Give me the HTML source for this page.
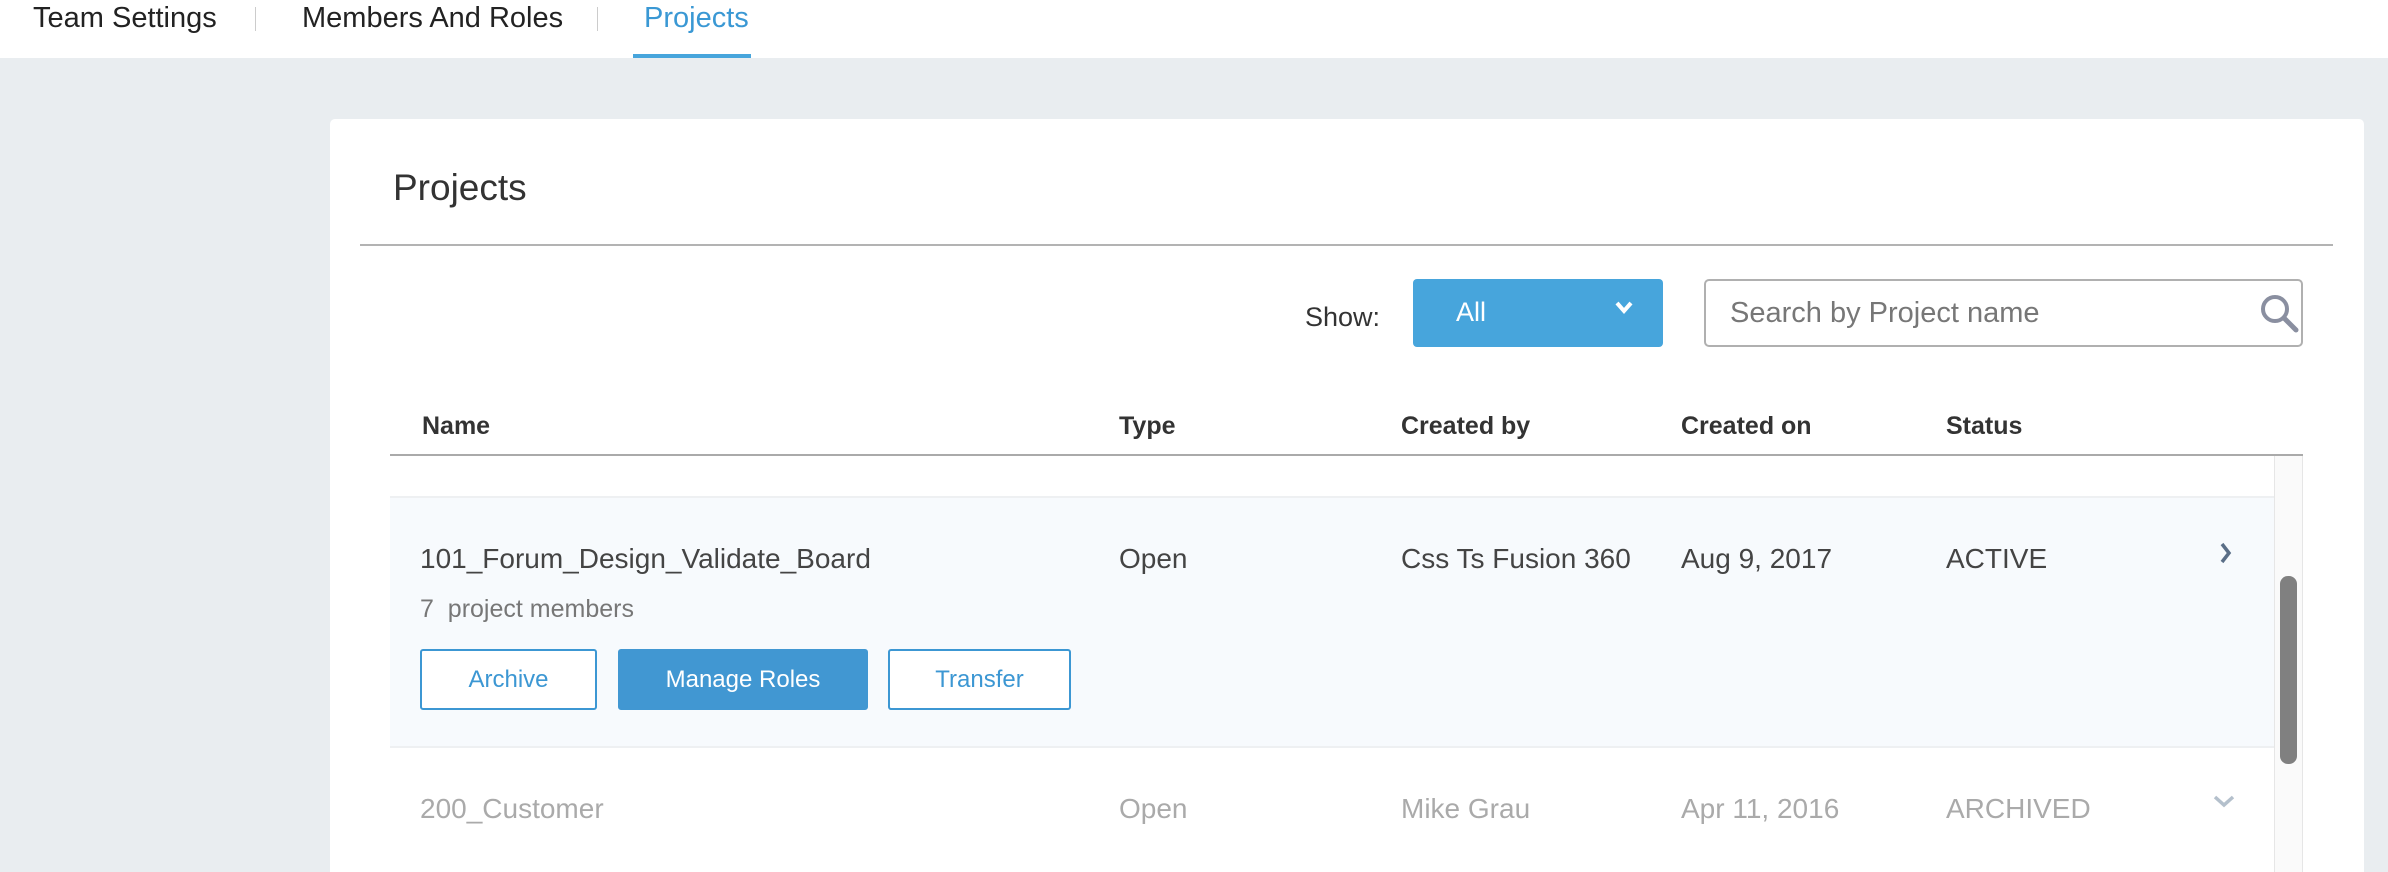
<!DOCTYPE html>
<html><head><meta charset="utf-8"><style>
*{margin:0;padding:0;box-sizing:border-box}
html,body{width:2388px;height:872px;overflow:hidden}
body{background:#e9edf0;font-family:"Liberation Sans",sans-serif;position:relative}
.a{position:absolute;white-space:nowrap;line-height:1}
.top{position:absolute;left:0;top:0;width:2388px;height:58px;background:#fff}
.sep{position:absolute;top:7px;width:1px;height:24px;background:#ccc}
.card{position:absolute;left:330px;top:119px;width:2034px;height:753px;background:#fff;border-radius:5px 5px 0 0}
.th{font-size:25px;color:#333;font-weight:bold;top:414px}
.r1{font-size:28px;color:#444;top:545px}
.r2{font-size:28px;color:#aaa;top:795px}
.btn{position:absolute;top:649px;height:61px;border:2px solid #3c97d3;border-radius:3px;color:#3c97d3;font-size:24px;display:flex;align-items:center;justify-content:center;background:#fff}
</style></head><body>
<div class="top"></div>
<div class="a" style="left:33px;top:4px;font-size:29px;color:#222">Team Settings</div>
<div class="sep" style="left:255px"></div>
<div class="a" style="left:302px;top:4px;font-size:29px;color:#222">Members And Roles</div>
<div class="sep" style="left:597px"></div>
<div class="a" style="left:644px;top:4px;font-size:29px;color:#3a98d4">Projects</div>
<div style="position:absolute;left:633px;top:54px;width:118px;height:4px;background:#47a5dc"></div>

<div class="card"></div>
<div class="a" style="left:393px;top:169px;font-size:37px;color:#333">Projects</div>
<div style="position:absolute;left:360px;top:244px;width:1973px;height:2px;background:#b3b3b3"></div>

<div class="a" style="left:1305px;top:304px;font-size:27px;color:#333">Show:</div>
<div style="position:absolute;left:1413px;top:279px;width:250px;height:68px;background:#47a5dc;border-radius:4px"></div>
<div class="a" style="left:1456px;top:299px;font-size:27px;color:#fff">All</div>
<svg style="position:absolute;left:1614px;top:300px" width="20" height="16" viewBox="0 0 20 16"><path d="M3 3 L10 11 L17 3" stroke="#fff" stroke-width="4" fill="none"/></svg>
<div style="position:absolute;left:1704px;top:279px;width:599px;height:68px;border:2px solid #b0b0b0;border-radius:5px"></div>
<div class="a" style="left:1730px;top:299px;font-size:29px;color:#777">Search by Project name</div>
<svg style="position:absolute;left:2258px;top:292px" width="44" height="44" viewBox="0 0 44 44"><circle cx="17" cy="17" r="12" stroke="#8a8fa0" stroke-width="4" fill="none"/><path d="M26 26 L38 38" stroke="#8a8fa0" stroke-width="5" stroke-linecap="round"/></svg>

<div class="a th" style="left:422px">Name</div>
<div class="a th" style="left:1119px">Type</div>
<div class="a th" style="left:1401px">Created by</div>
<div class="a th" style="left:1681px">Created on</div>
<div class="a th" style="left:1946px">Status</div>
<div style="position:absolute;left:390px;top:454px;width:1913px;height:2px;background:#aaa"></div>

<div style="position:absolute;left:2274px;top:456px;width:29px;height:416px;background:#fafafa;border-left:1px solid #e6e6e6;border-right:1px solid #e6e6e6"></div>
<div style="position:absolute;left:2280px;top:576px;width:17px;height:188px;background:#808080;border-radius:8px"></div>

<div style="position:absolute;left:390px;top:496px;width:1884px;height:252px;background:#f7fafd;border-top:2px solid #eef0f2;border-bottom:2px solid #eef0f2"></div>
<div class="a r1" style="left:420px">101_Forum_Design_Validate_Board</div>
<div class="a r1" style="left:1119px">Open</div>
<div class="a r1" style="left:1401px">Css Ts Fusion 360</div>
<div class="a r1" style="left:1681px">Aug 9, 2017</div>
<div class="a r1" style="left:1946px">ACTIVE</div>
<div class="a" style="left:420px;top:597px;font-size:25px;color:#777">7&nbsp; project members</div>
<svg style="position:absolute;left:2218px;top:541px" width="16" height="24" viewBox="0 0 16 24"><path d="M4 3 L11 12 L4 21" stroke="#5a6e87" stroke-width="3.5" fill="none"/></svg>
<div class="btn" style="left:420px;width:177px">Archive</div>
<div class="btn" style="left:618px;width:250px;background:#4197d2;border-color:#4197d2;color:#fff">Manage Roles</div>
<div class="btn" style="left:888px;width:183px">Transfer</div>

<div class="a r2" style="left:420px">200_Customer</div>
<div class="a r2" style="left:1119px">Open</div>
<div class="a r2" style="left:1401px">Mike Grau</div>
<div class="a r2" style="left:1681px">Apr 11, 2016</div>
<div class="a r2" style="left:1946px">ARCHIVED</div>
<svg style="position:absolute;left:2212px;top:794px" width="24" height="16" viewBox="0 0 24 16"><path d="M3 3 L12 11 L21 3" stroke="#b4c0cc" stroke-width="3.5" fill="none"/></svg>
</body></html>
